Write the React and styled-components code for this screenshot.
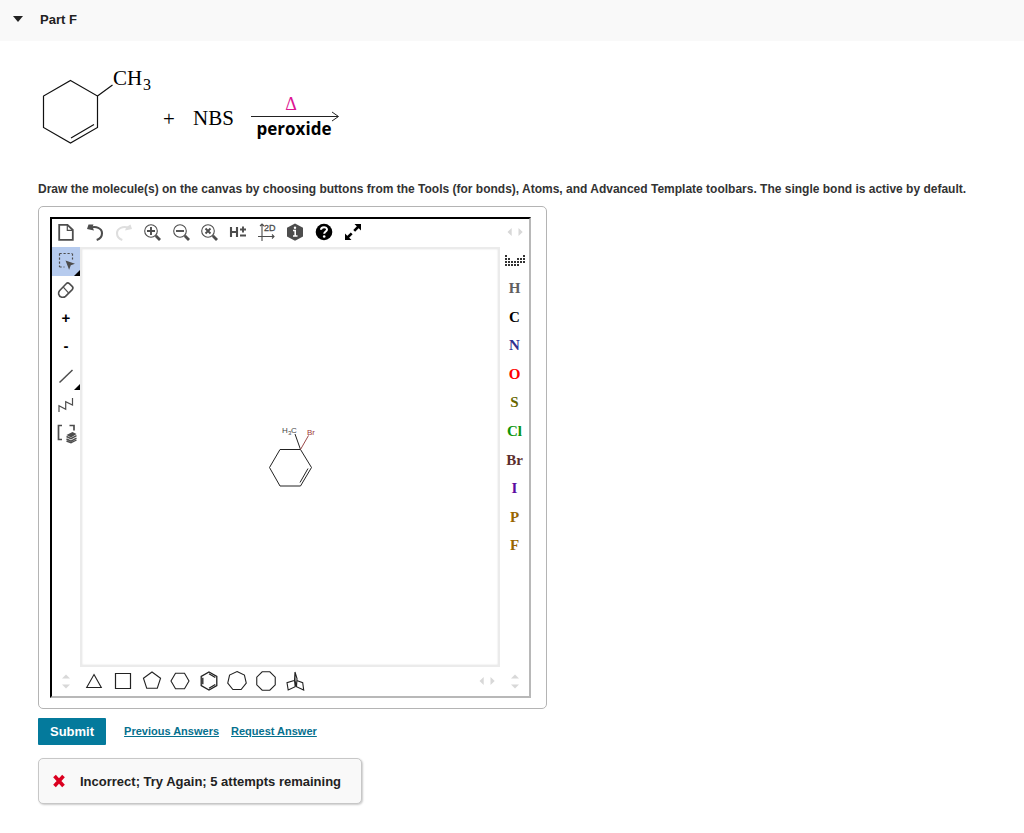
import React, { useState } from "react";
import styled, { createGlobalStyle } from "styled-components";

const GlobalStyle = createGlobalStyle`
  * {
    box-sizing: border-box;
  }

  body {
    margin: 0;
    background: #fff;
    color: #222;
    font-family: "Liberation Sans", Arial, sans-serif;
    font-size: 13px;
  }
`;

const PartHeader = styled.header`
  background: #f9f9f9;
  padding: 0 12px;
`;

const PartToggle = styled.button`
  display: flex;
  align-items: center;
  gap: 16px;
  height: 41px;
  padding: 0 0 3px;
  border: none;
  background: none;
  color: #222;
  font: inherit;
  font-weight: bold;
  cursor: pointer;
`;

const Content = styled.main`
  display: flex;
  flex-direction: column;
  align-items: flex-start;
  padding: 24px 16px 24px 38px;
`;

const Reaction = styled.svg`
  width: 310px;
  height: 84px;
  font-family: "Liberation Serif", "Times New Roman", serif;
`;

const Instructions = styled.p`
  margin: 31px 0 8px;
  color: #333;
  font-size: 12px;
  line-height: 18px;
  font-weight: bold;
`;

const Frame = styled.section`
  padding: 10px 15px 10px 11px;
  border: 1px solid #b4b4b4;
  border-radius: 5px;
`;

const Editor = styled.div`
  display: grid;
  grid-template-columns: 28px 420px 29px;
  grid-template-rows: 28px 420px 29px;
  border: 2px solid #000;
  border-right-color: #b8b8b8;
  border-bottom-color: #b8b8b8;
`;

const ToolRow = styled.div`
  grid-column: 1 / -1;
  display: flex;
  justify-content: space-between;
  padding-bottom: 2px;
`;

const ToolGroup = styled.div`
  display: grid;
  grid-template-columns: repeat(${({ $count }) => $count}, 1fr);
  width: ${({ $count }) => ($count > 8 ? "315px" : "229px")};
`;

const ToolColumn = styled.div`
  display: grid;
  grid-template-rows: repeat(${({ $count }) => $count}, 1fr);
  height: ${({ $count }) => ($count > 8 ? "314px" : "200px")};
`;

const ArrowGroup = styled.div`
  display: flex;
`;

const Tool = styled.button`
  position: relative;
  display: flex;
  align-items: center;
  justify-content: center;
  min-width: 28px;
  padding: 0;
  border: none;
  background: ${({ $active }) => ($active ? "#b6cbee" : "none")};
  color: ${({ $color }) => $color || "#4d4d4d"};
  cursor: pointer;

  &::after {
    content: "";
    position: absolute;
    right: 0;
    bottom: 0;
    display: ${({ $menu }) => ($menu ? "block" : "none")};
    border-left: 6px solid transparent;
    border-bottom: 6px solid #000;
  }
`;

const AtomButton = styled(Tool)`
  padding-bottom: 2px;
  font-family: "Liberation Serif", "Times New Roman", serif;
  font-size: 15px;
  font-weight: bold;
`;

const ChargeButton = styled(Tool)`
  padding-bottom: 2px;
  font-family: "Liberation Sans", Arial, sans-serif;
  font-size: 15px;
  font-weight: bold;
`;

const Canvas = styled.div`
  display: flex;
  align-items: center;
  justify-content: center;
  border: 2px solid #ebebeb;
  box-shadow: inset 0 0 2px #ddd;
`;

const Molecule = styled.svg`
  width: 90px;
  height: 90px;
  font-family: "Liberation Sans", Arial, sans-serif;
`;

const Actions = styled.div`
  display: flex;
  align-items: center;
  margin-top: 9px;
`;

const SubmitButton = styled.button`
  height: 27px;
  padding: 0 12px;
  margin-right: 18px;
  border: none;
  border-radius: 1px;
  background: #047a9c;
  color: #fff;
  font: bold 13px "Liberation Sans", Arial, sans-serif;
  cursor: pointer;
`;

const ActionLink = styled.a`
  margin-right: 12px;
  padding-bottom: 2px;
  color: #05708e;
  font-size: 11px;
  font-weight: bold;
`;

const Feedback = styled.div`
  display: flex;
  align-items: center;
  gap: 13px;
  height: 46px;
  margin-top: 13px;
  padding: 0 20px 0 12px;
  border: 1px solid #c7c7c7;
  border-radius: 5px;
  background: #f9f9f9;
  box-shadow: 1px 1px 2px #ccc;
  font-weight: bold;
`;

const StyledIcon = styled.svg`
  display: block;
  width: 24px;
  height: 24px;
  fill: none;
  stroke: currentColor;
  stroke-width: 1.5;
`;

const Icon = ({ children }) => (
  <StyledIcon viewBox="0 0 24 24" aria-hidden="true">
    {children}
  </StyledIcon>
);

const Magnifier = ({ children }) => (
  <Icon>
    <circle cx="11" cy="11" r="6.3" strokeWidth="1.1" />
    <path d="M15.8 15.8L20 20" strokeWidth="2.8" />
    {children}
  </Icon>
);

// regular polygon centred in the icon box, first corner at the given angle
const polygonPoints = (sides, radius, start) =>
  Array.from({ length: sides }, (_, i) => {
    const angle = ((start + (360 / sides) * i) * Math.PI) / 180;
    return `${12 + radius * Math.cos(angle)},${12 + radius * Math.sin(angle)}`;
  }).join(" ");

const Ring = ({ sides, radius = 9, start = -90 }) => (
  <Icon>
    <polygon points={polygonPoints(sides, radius, start)} strokeWidth="1.1" />
  </Icon>
);

const topTools = [
  {
    label: "New document",
    icon: (
      <Icon>
        <path d="M5.2 4.8h8.300l5.300 5.200v9.800H5.200z" strokeWidth="1.800" />
        <path d="M13.300 5v5.300h5.300" strokeWidth="1.200" />
      </Icon>
    )
  },
  {
    label: "Undo",
    icon: (
      <Icon>
        <path d="M7 8c6-2.500 12 .5 12 5.300 0 3.700-2.500 5.800-5.300 6.700" strokeWidth="2.100" />
        <path d="M4 9L5.500 4.500h5L9.500 7l1.500 3.500z" fill="currentColor" stroke="none" />
      </Icon>
    )
  },
  {
    label: "Redo",
    color: "#dedede",
    icon: (
      <Icon>
        <path d="M17 8C11 5.500 5 8.500 5 13.300c0 3.700 2.500 5.800 5.300 6.700" strokeWidth="2.100" />
        <path d="M20 9l-1.500-4.500L14.500 7 13 10.500z" fill="currentColor" stroke="none" />
      </Icon>
    )
  },
  {
    label: "Zoom in",
    icon: (
      <Magnifier>
        <path d="M7 11h8M11 7v8" strokeWidth="1.900" />
      </Magnifier>
    )
  },
  {
    label: "Zoom out",
    icon: (
      <Magnifier>
        <path d="M7 11h8" strokeWidth="1.900" />
      </Magnifier>
    )
  },
  {
    label: "Zoom to fit",
    icon: (
      <Magnifier>
        <path d="M8.500 8.500l5 5M13.500 8.500l-5 5" strokeWidth="1.900" />
      </Magnifier>
    )
  },
  {
    label: "Toggle hydrogens",
    icon: (
      <Icon>
        <path d="M5 7v10M11 7v10M5 12h6" strokeWidth="2.100" />
        <path d="M14 9.500h6M17 6.500v6M14 15.500h6" strokeWidth="1.900" />
      </Icon>
    )
  },
  {
    label: "Clean 2D",
    icon: (
      <Icon>
        <path d="M7 4v17M3 16.500h16M5 6l2-2 2 2M17 14.500l2 2-2 2" strokeWidth="1.100" />
        <text
          x="9"
          y="11"
          fontFamily="Liberation Sans"
          fontSize="9"
          fill="currentColor"
          strokeWidth="0.3"
        >
          2D
        </text>
      </Icon>
    )
  },
  {
    label: "Information",
    icon: (
      <Icon>
        <path d="M12 3.500l8 4.300v8.600L12 20.700l-8-4.300V7.800z" fill="currentColor" stroke="none" />
        <path d="M10 10.500h2.200V16M10 16h4.500" stroke="#fff" strokeWidth="1.600" />
        <circle cx="12" cy="7.700" r="1.200" fill="#fff" stroke="none" />
      </Icon>
    )
  },
  {
    label: "Help",
    color: "#000",
    icon: (
      <Icon>
        <circle cx="12" cy="12" r="8.300" fill="currentColor" stroke="none" />
        <path
          d="M9 9.800c0-3.600 6-3.400 6-.3 0 2-2.800 1.900-2.800 4.300"
          stroke="#fff"
          strokeWidth="2"
        />
        <circle cx="12.200" cy="16.500" r="1.300" fill="#fff" stroke="none" />
      </Icon>
    )
  },
  {
    label: "Full screen",
    color: "#000",
    icon: (
      <Icon>
        <path d="M6.500 17.500l4.200-4.200M13.200 10.800l4.300-4.300" strokeWidth="2.600" />
        <path d="M13.500 4H20v6.500zM4 13.500V20h6.500z" fill="currentColor" stroke="none" />
      </Icon>
    )
  }
];

const eraserIcon = (
  <Icon>
    <path
      d="M5.500 12.800l6.700-7.100q1.500-1.500 3.200 0l2.800 2.700q1.500 1.500 0 3.200l-6.700 6.700q-1.300 1.200-3.800.9-2.600-.7-3.100-3.200-.2-1.700.9-3.200z"
      strokeWidth="1.600"
    />
    <path d="M9.300 9.200l5.200 5.600" strokeWidth="1.200" />
  </Icon>
);

const selectIcon = (
  <Icon>
    <path
      d="M5.500 4.500h12.500M5.500 4.500v13.500M5.500 18h5M18.500 4.500v6"
      strokeWidth="1.200"
      strokeDasharray="2.200 1.800"
    />
    <path d="M11.500 11.500l9.500 3.200-4.200 1.500-1.700 4.600z" fill="currentColor" stroke="none" />
  </Icon>
);

const bondIcon = (
  <Icon>
    <path d="M5.500 18.500l13-12.500" />
  </Icon>
);

const chainIcon = (
  <Icon>
    <path d="M5 20v-6.300l6.700 3.500V9.700l6.800 3.300V6" strokeWidth="1.200" />
  </Icon>
);

const groupIcon = (
  <Icon>
    <path d="M8 4.500H4.500v14H8M15.500 4.500h4.500v5" strokeWidth="1.700" />
    <path d="M12.500 14l6-3 4 2-5.500 3.500z" fill="currentColor" stroke="none" />
    <path
      d="M12.500 15.500l4.500 2.200 5.500-3M12.500 18l4.500 2.200 5.500-3M12.500 20l4.500 1.800 5.500-2.800"
      strokeWidth="1.400"
    />
  </Icon>
);

const atoms = [
  { symbol: "H", color: "#606060" },
  { symbol: "C", color: "#000000" },
  { symbol: "N", color: "#303090" },
  { symbol: "O", color: "#ff0000" },
  { symbol: "S", color: "#666600" },
  { symbol: "Cl", color: "#0a960a" },
  { symbol: "Br", color: "#5c2e2e" },
  { symbol: "I", color: "#5b0ba0" },
  { symbol: "P", color: "#996600" },
  { symbol: "F", color: "#996600" }
];

const periodicDots = ["x.....x", "xx..xxx", "xxxxxxx", "xxxxx.."];

const templates = [
  {
    label: "Cyclopropane",
    icon: (
      <Icon>
        <path d="M12 5.500l7.300 13H4.700z" strokeWidth="1.100" />
      </Icon>
    )
  },
  {
    label: "Cyclobutane",
    icon: (
      <Icon>
        <path d="M4.500 4.500h15v15h-15z" strokeWidth="1.200" />
      </Icon>
    )
  },
  { label: "Cyclopentane", icon: <Ring sides={5} /> },
  { label: "Cyclohexane", icon: <Ring sides={6} start={0} /> },
  {
    label: "Benzene",
    icon: (
      <Icon>
        <polygon points={polygonPoints(6, 9, -90)} strokeWidth="1.300" />
        <path d="M5.800 8.700v6.600M12 4.800l6.300 3.700M12 19.200l6.300-3.700" strokeWidth="1.300" />
      </Icon>
    )
  },
  { label: "Cycloheptane", icon: <Ring sides={7} radius={9.5} /> },
  { label: "Cyclooctane", icon: <Ring sides={8} radius={10} start={22.5} /> },
  {
    label: "Bicyclic",
    icon: (
      <Icon>
        <path
          d="M12 3l-.5 8.500.7 6.200L5.200 21 4 13.700l8-2.400M12 3l2 6.500-.5 8.200 7.200 3.300-1-7.300-6-2.200M12 3v8.500l1.500 6"
          strokeWidth="1.100"
        />
      </Icon>
    )
  }
];

const Arrows = ({ vertical }) => (
  <Icon>
    <path
      d={
        vertical
          ? "M8 9.500L12 5.500l4 4zM8 15.500l4 4 4-4z"
          : "M8.700 8L4.500 12l4.200 4zM15.500 8l4.200 4-4.200 4z"
      }
      fill="#d8d8d8"
      stroke="none"
    />
  </Icon>
);

const App = () => {
  const [open, setOpen] = useState(true);
  const [activeTool, setActiveTool] = useState("Select");

  const toolProps = (label) => ({
    type: "button",
    "aria-label": label,
    $active: activeTool === label,
    onClick: () => setActiveTool(label)
  });

  return (
    <>
      <GlobalStyle />
      <PartHeader>
        <PartToggle type="button" aria-expanded={open} onClick={() => setOpen(!open)}>
          <svg width="12" height="6" viewBox="0 0 12 6" aria-hidden="true">
            <path d="M1 0h10L6 6z" fill="#222" />
          </svg>
          Part F
        </PartToggle>
      </PartHeader>
      {open && (
        <Content>
          <Reaction viewBox="38 65 310 84" role="img" aria-label="Reaction">
            <path
              d="M70.500 80.500L97.500 96v31.500L70.500 143l-27-15.500V96zM97.500 96l15-11M71 138l23-13.500"
              fill="none"
              stroke="#111"
              strokeWidth="1.200"
            />
            <text x="113" y="85" fontSize="21">CH</text>
            <text x="143" y="90" fontSize="16">3</text>
            <text x="163" y="126" fontSize="21">+</text>
            <text x="193" y="125" fontSize="21">NBS</text>
            <path d="M251 116.500h87M332 112l6.500 4.500-6.500 4.500" fill="none" stroke="#222" />
            <text x="291" y="110" fontSize="18" fill="#dd1592" textAnchor="middle">Δ</text>
            <text
              x="294"
              y="135"
              fontSize="17"
              fontFamily="Open Sans, sans-serif"
              fontWeight="700"
              textAnchor="middle"
            >
              peroxide
            </text>
          </Reaction>
          <Instructions>
            Draw the molecule(s) on the canvas by choosing buttons from the Tools (for bonds),
            Atoms, and Advanced Template toolbars. The single bond is active by default.
          </Instructions>
          <Frame>
            <Editor>
              <ToolRow>
                <ToolGroup $count={topTools.length}>
                  {topTools.map(({ label, icon, color }) => (
                    <Tool key={label} type="button" aria-label={label} $color={color}>
                      {icon}
                    </Tool>
                  ))}
                </ToolGroup>
                <Tool type="button" aria-label="Scroll top toolbar">
                  <Arrows />
                </Tool>
              </ToolRow>
              <ToolColumn $count={7}>
                <Tool {...toolProps("Select")} $menu>{selectIcon}</Tool>
                <Tool {...toolProps("Erase")}>{eraserIcon}</Tool>
                <ChargeButton {...toolProps("Increase charge")} $color="#000">+</ChargeButton>
                <ChargeButton {...toolProps("Decrease charge")} $color="#000">-</ChargeButton>
                <Tool {...toolProps("Single bond")} $menu>{bondIcon}</Tool>
                <Tool {...toolProps("Chain")}>{chainIcon}</Tool>
                <Tool {...toolProps("Group")}>{groupIcon}</Tool>
              </ToolColumn>
              <Canvas>
                <Molecule viewBox="245 412 90 90" role="img" aria-label="Molecule">
                  <path
                    d="M300.500 449.500h-20.500L269.500 467.500l10.500 18.500h20.500l11-18.500zM300 482.500l8-14M300.500 449.500L295 434"
                    fill="none"
                    stroke="#222"
                  />
                  <path d="M300.500 449.500l8-14" stroke="#9c4a4a" />
                  <text x="282" y="433" fontSize="8" fill="#444">H</text>
                  <text x="288" y="435" fontSize="6" fill="#444">3</text>
                  <text x="291" y="433" fontSize="8" fill="#444">C</text>
                  <text x="307" y="435" fontSize="8" fill="#9c3a3a">Br</text>
                </Molecule>
              </Canvas>
              <ToolColumn $count={11}>
                <Tool type="button" aria-label="Periodic table">
                  <Icon>
                    {periodicDots.map((row, y) =>
                      [...row].map(
                        (dot, x) =>
                          dot === "x" && (
                            <rect
                              key={`${x}-${y}`}
                              x={2 + x * 3}
                              y={6 + y * 3}
                              width="2"
                              height="2"
                              fill="#333"
                              stroke="none"
                            />
                          )
                      )
                    )}
                  </Icon>
                </Tool>
                {atoms.map(({ symbol, color }) => (
                  <AtomButton key={symbol} type="button" $color={color}>
                    {symbol}
                  </AtomButton>
                ))}
              </ToolColumn>
              <ToolRow>
                <ArrowGroup>
                  <Tool type="button" aria-label="Scroll left toolbar">
                    <Arrows vertical />
                  </Tool>
                  <ToolGroup $count={templates.length}>
                    {templates.map(({ label, icon }) => (
                      <Tool key={label} type="button" aria-label={label} $color="#222">
                        {icon}
                      </Tool>
                    ))}
                  </ToolGroup>
                </ArrowGroup>
                <ArrowGroup>
                  <Tool type="button" aria-label="Scroll templates">
                    <Arrows />
                  </Tool>
                  <Tool type="button" aria-label="Scroll atoms">
                    <Arrows vertical />
                  </Tool>
                </ArrowGroup>
              </ToolRow>
            </Editor>
          </Frame>
          <Actions>
            <SubmitButton type="button">Submit</SubmitButton>
            <ActionLink href="#previous">Previous Answers</ActionLink>
            <ActionLink href="#request">Request Answer</ActionLink>
          </Actions>
          <Feedback role="status">
            <svg width="16" height="16" viewBox="0 0 16 16" aria-hidden="true">
              <path d="M3.500 3l9 10M12.500 3l-9 10" stroke="#db0020" strokeWidth="3.600" />
            </svg>
            Incorrect; Try Again; 5 attempts remaining
          </Feedback>
        </Content>
      )}
    </>
  );
};

export default App;
